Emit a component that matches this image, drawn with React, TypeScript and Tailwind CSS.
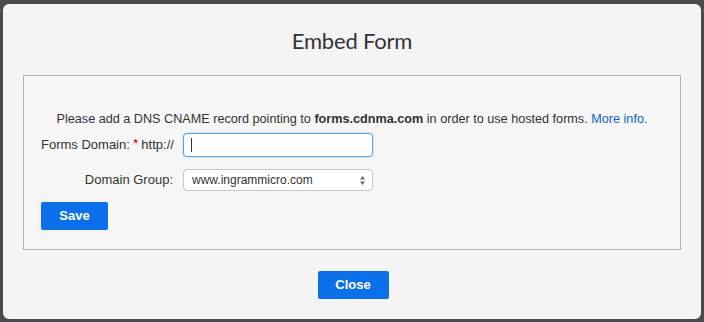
import React from "react";

export default function App() {
  return (
    <div className="h-[322px] w-[704px] bg-[#4b4b4b] pt-[4px] pl-[3px]" style={{ fontFamily: '"Liberation Sans", Arial, sans-serif' }}>
      <div className="w-[698px] h-[315px] rounded-[6px] bg-[#f4f4f4] flex flex-col">
        <div className="h-[71px] flex items-center justify-center pt-[2px]">
          <h1 className="text-[22px] text-[#333] tracking-[-0.2px]" style={{ fontFamily: 'Lato, "Liberation Sans", sans-serif' }}>Embed Form</h1>
        </div>
        <div className="ml-[20px] w-[658px] h-[175px] border border-[#b5b5b5] bg-[#f6f6f6] flex flex-col">
          <p className="mt-[35px] text-center text-[12.65px] text-[#333] leading-[16px]">
            Please add a DNS CNAME record pointing to <b>forms.cdnma.com</b> in order to use hosted forms.{" "}
            <a className="text-[#1264c6]">More info.</a>
          </p>
          <div className="mt-[6px] ml-[17px] grid grid-cols-[132px_190px] gap-x-[10px] items-center">
            <label className="text-right text-[13px] text-[#333] whitespace-nowrap">
              Forms Domain: <span className="text-[#e0101e] font-bold relative top-[-2px] text-[11px]">*</span> http://
            </label>
            <div className="h-[24px] rounded-[4px] border border-[#5aa2dd] bg-white shadow-[0_0_2px_#8ec3ee] flex items-center pl-[7px]">
              <div className="w-[1px] h-[14px] bg-[#333]"></div>
            </div>
            <label className="mt-[12px] text-right text-[13px] text-[#333]">Domain Group:</label>
            <div className="mt-[12px] h-[22px] rounded-[4px] border border-[#c8c8c8] bg-white flex items-center justify-between pl-[8px] pr-[6px]">
              <span className="text-[12px] text-[#333]">www.ingrammicro.com</span>
              <svg width="7" height="11" viewBox="0 0 7 11">
                <path d="M3.5 1 L6 4.5 H1 Z" fill="#666" />
                <path d="M3.5 10 L6 6.5 H1 Z" fill="#666" />
              </svg>
            </div>
          </div>
          <div className="mt-[11px] ml-[17px]">
            <button className="w-[67px] h-[28px] rounded-[2px] bg-[#0a6fe8] text-white text-[13px] font-bold">Save</button>
          </div>
        </div>
        <div className="flex justify-center mt-[21px] pl-[2px]">
          <button className="w-[71px] h-[28px] rounded-[2px] bg-[#0a6fe8] text-white text-[13px] font-bold">Close</button>
        </div>
      </div>
    </div>
  );
}
